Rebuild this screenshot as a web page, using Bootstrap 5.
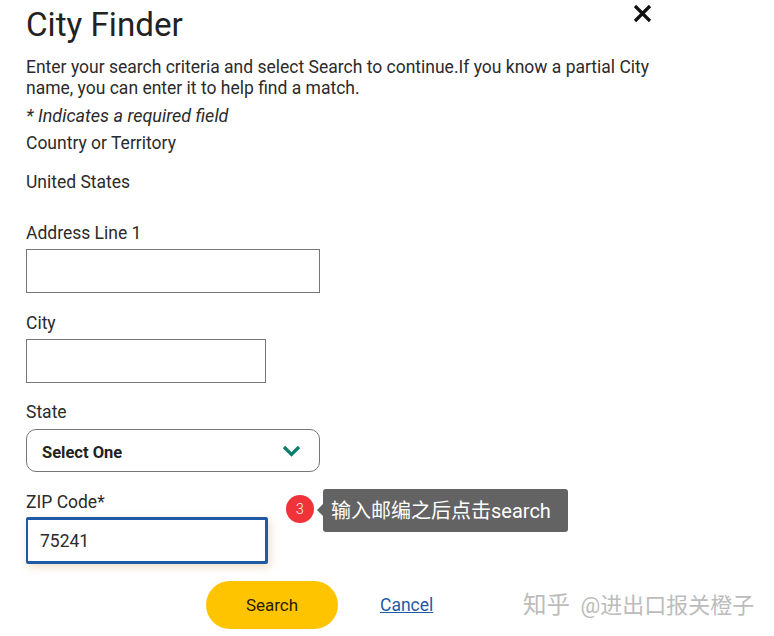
<!DOCTYPE html>
<html lang="en">
    <head>
        <meta charset="UTF-8">
        <title>City Finder</title>
        <link href="https://cdn.jsdelivr.net/npm/bootstrap@5.3.0/dist/css/bootstrap.min.css" rel="stylesheet">
        <style>
            body { font-family: Roboto, "Noto Sans CJK SC", sans-serif; color: #2b2b2b; background: #fff; overflow: hidden; height: 636px; }
            .finder { width: 626px; margin-left: 26px; padding-top: 4px; font-size: 17.5px; line-height: 21px; position: relative; }
            .finder-title { font-size: 33.2px; line-height: 42px; font-weight: 400; margin: 0 0 11px; color: #222; }
            .finder-close { background: none; border: 0; padding: 0; width: 19px; height: 19px; line-height: 0; }
            .finder-intro { margin: 0 0 6px; width: 640px; }
            .finder-req { font-style: italic; font-size: 18px; margin: 0 0 5px; line-height: 22px; }
            .finder-static { margin: 18px 0 29px; }
            .finder-label { display: block; margin: 0 0 5px; line-height: 22px; }
            .finder-input { display: block; border: 1px solid #767676; height: 44px; font-size: 17.5px; padding: 0 12px; background: #fff; outline: 0; color: #2b2b2b; }
            .w-long { width: 294px; }
            .w-short { width: 240px; }
            .finder-field { margin-bottom: 18px; }
            .finder-field-addr { margin-bottom: 19px; }
            .finder-field-state { margin-bottom: 19px; }
            .finder-field-state .finder-label { margin-bottom: 6px; }
            .finder-select { width: 294px; height: 43px; border: 1px solid #767676; border-radius: 10px; padding: 0 18px 0 15px; font-size: 16.5px; font-weight: 700; color: #222; }
            .finder-zip-label { margin-bottom: 4px; }
            .finder-zip { width: 242px; height: 47px; border: 3px solid #1f5aa6; border-left-width: 2px; border-radius: 2px; box-shadow: 2px 3px 8px rgba(214, 180, 130, .45); }
            .finder-actions { width: 408px; margin-top: 17px; }
            .finder-search { width: 132px; height: 48px; background: #ffc400; border: 0; border-radius: 24px; font-size: 17px; color: #2a1c00; margin-left: 180px; }
            .finder-cancel { color: #1f5aa6; margin-left: 42px; }
            .note-badge { position: absolute; left: 260px; top: 495px; width: 28px; height: 28px; background: #ef3339; color: #fff; border-radius: 50%; font-size: 14px; font-weight: 300; }
            .note-tip { position: absolute; left: 297px; top: 489px; width: 245px; height: 43px; background: #636363; color: #fff; border-radius: 3px; font-size: 20px; padding: 2px 0 0 8px; }
            .note-tip::before { content: ""; position: absolute; left: -6px; top: 15px; border: 6px solid transparent; border-left-width: 0; border-right-color: #636363; }
            .watermark { position: absolute; left: 523px; top: 589px; font-size: 22px; line-height: 32px; word-spacing: 5px; color: #bcbcbc; white-space: nowrap; }
            .watermark-brand { font-size: 23.5px; }
        </style>
    </head>
    <body>
        <div class="finder">
            <div class="d-flex justify-content-between align-items-start">
                <h1 class="finder-title">City Finder</h1>
                <button class="finder-close" type="button" aria-label="Close">
                    <svg width="19" height="19" viewBox="0 0 19 19"><path d="M2 2 L17 17 M17 2 L2 17" stroke="#111" stroke-width="3.2" fill="none"/></svg>
                </button>
            </div>
            <p class="finder-intro">Enter your search criteria and select Search to continue.If you know a partial City name, you can enter it to help find a match.</p>
            <p class="finder-req">* Indicates a required field</p>
            <div class="finder-label mb-0">Country or Territory</div>
            <p class="finder-static">United States</p>

            <div class="finder-field-addr">
                <label class="finder-label">Address Line 1</label>
                <input class="finder-input w-long" type="text">
            </div>
            <div class="finder-field">
                <label class="finder-label">City</label>
                <input class="finder-input w-short" type="text">
            </div>
            <div class="finder-field-state">
                <label class="finder-label">State</label>
                <div class="finder-select d-flex align-items-center justify-content-between">
                    <span class="pt-1">Select One</span>
                    <svg width="19" height="12" viewBox="0 0 19 12"><path d="M2 2 L9.5 9.5 L17 2" stroke="#0d7f6e" stroke-width="3.2" fill="none"/></svg>
                </div>
            </div>
            <div>
                <label class="finder-label finder-zip-label">ZIP Code*</label>
                <input class="finder-input finder-zip" type="text" value="75241">
            </div>
            <div class="finder-actions d-flex align-items-center">
                <button class="finder-search" type="button">Search</button>
                <a class="finder-cancel" href="#">Cancel</a>
            </div>

            <div class="note-badge d-flex align-items-center justify-content-center">3</div>
            <div class="note-tip d-flex align-items-center">输入邮编之后点击search</div>
        </div>
        <div class="watermark"><span class="watermark-brand">知乎</span> @进出口报关橙子</div>
    </body>
</html>
